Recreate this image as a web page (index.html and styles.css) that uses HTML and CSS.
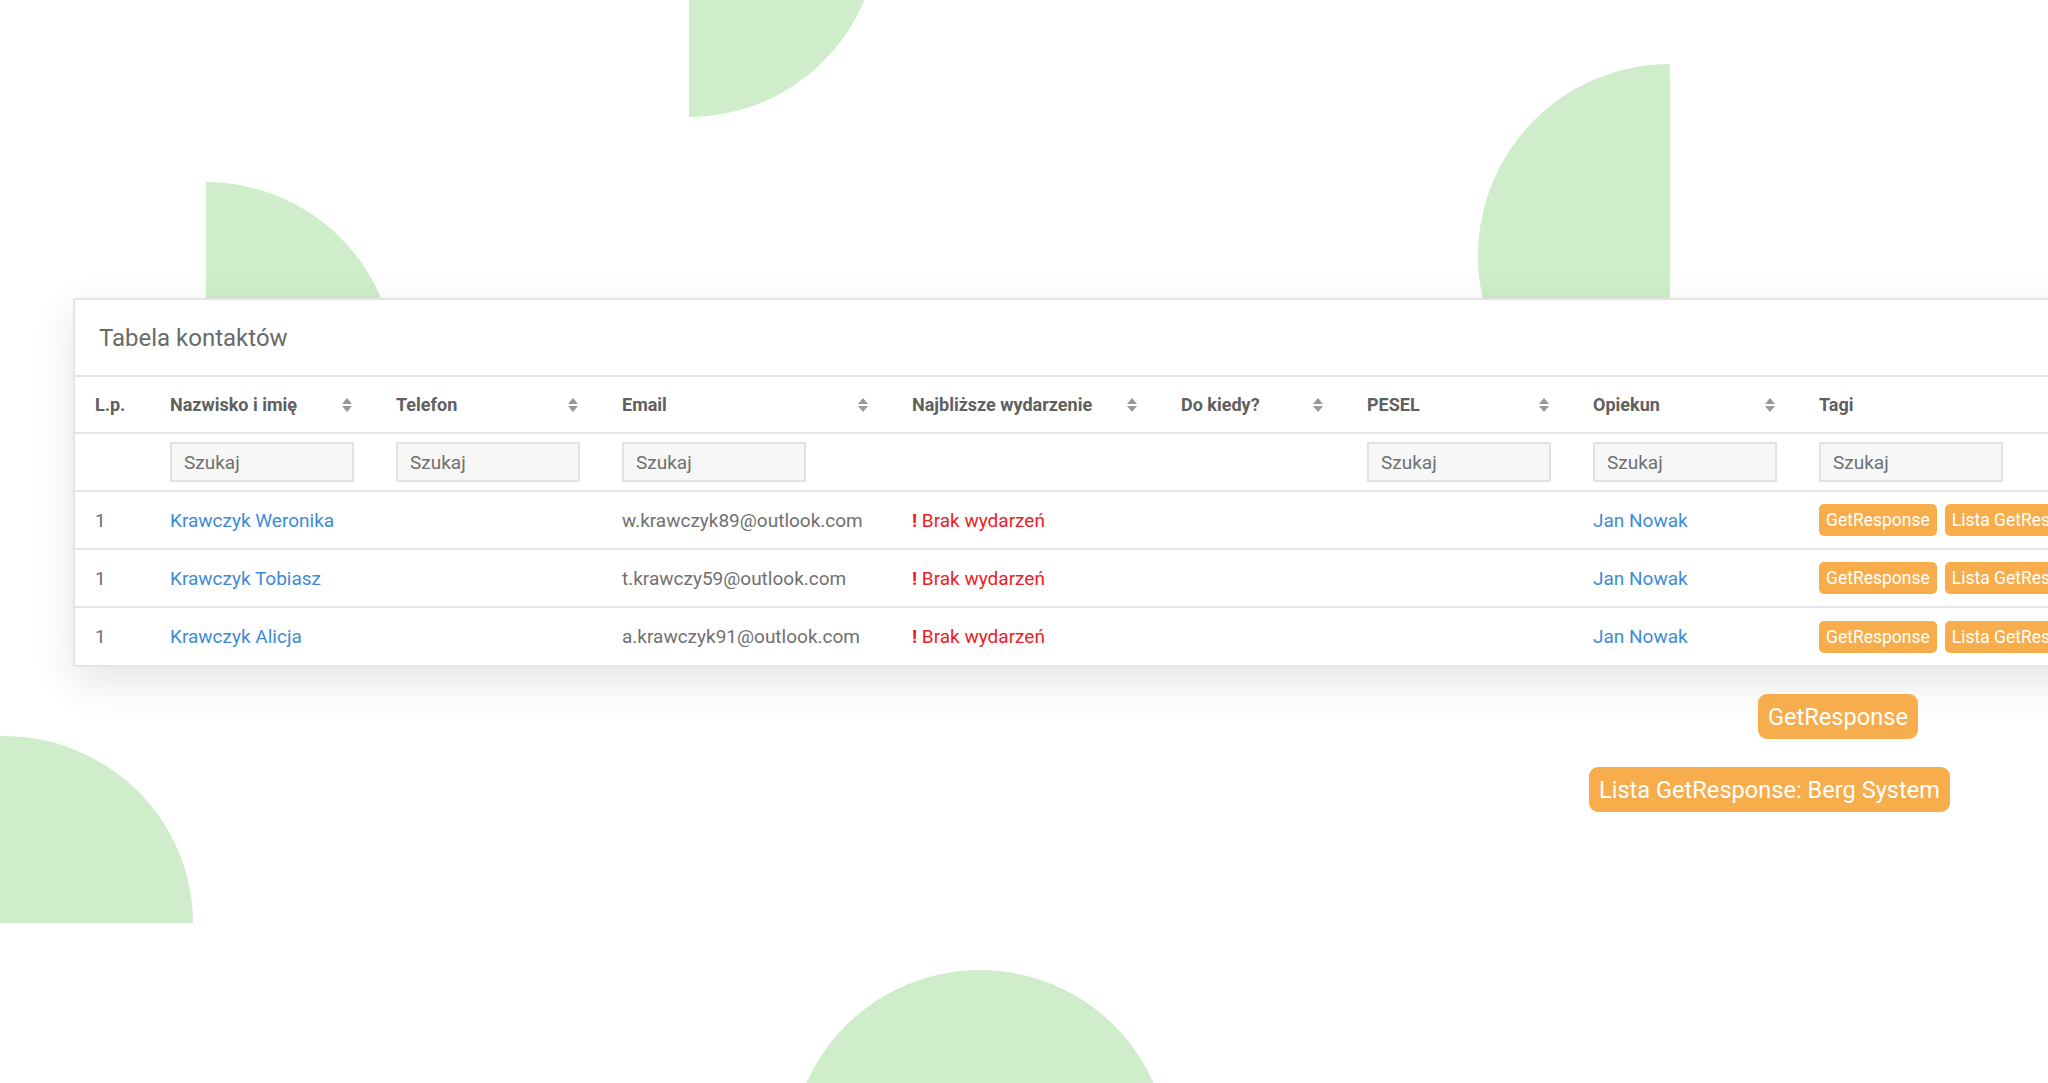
FILE: index.html
```html
<!DOCTYPE html>
<html lang="pl">
<head>
<meta charset="utf-8">
<title>Tabela kontaktów</title>
<link rel="stylesheet" href="styles.css">
</head>
<body>
<div class="canvas">
  <div class="blob blob-top"></div>
  <div class="blob blob-left"></div>
  <div class="blob blob-right"></div>
  <div class="blob blob-bottom-left"></div>
  <div class="blob blob-bottom"></div>

  <section class="card">
    <h2 class="card-title">Tabela kontaktów</h2>
    <table class="contacts">
      <colgroup>
        <col class="c-lp"><col class="c-name"><col class="c-phone"><col class="c-email">
        <col class="c-event"><col class="c-until"><col class="c-pesel"><col class="c-owner"><col class="c-tags">
      </colgroup>
      <thead>
        <tr class="head-row">
          <th>L.p.</th>
          <th><div class="th-in"><span>Nazwisko i imię</span><i class="sort"></i></div></th>
          <th><div class="th-in"><span>Telefon</span><i class="sort"></i></div></th>
          <th><div class="th-in"><span>Email</span><i class="sort"></i></div></th>
          <th><div class="th-in"><span>Najbliższe wydarzenie</span><i class="sort"></i></div></th>
          <th><div class="th-in"><span>Do kiedy?</span><i class="sort"></i></div></th>
          <th><div class="th-in"><span>PESEL</span><i class="sort"></i></div></th>
          <th><div class="th-in"><span>Opiekun</span><i class="sort"></i></div></th>
          <th>Tagi</th>
        </tr>
        <tr class="filter-row">
          <td></td>
          <td><input class="search" placeholder="Szukaj"></td>
          <td><input class="search" placeholder="Szukaj"></td>
          <td><input class="search" placeholder="Szukaj"></td>
          <td></td>
          <td></td>
          <td><input class="search" placeholder="Szukaj"></td>
          <td><input class="search" placeholder="Szukaj"></td>
          <td><input class="search" placeholder="Szukaj"></td>
        </tr>
      </thead>
      <tbody>
        <tr>
          <td>1</td>
          <td><a class="link">Krawczyk Weronika</a></td>
          <td></td>
          <td>w.krawczyk89@outlook.com</td>
          <td class="alert"><b>!</b> Brak wydarzeń</td>
          <td></td>
          <td></td>
          <td><a class="link">Jan Nowak</a></td>
          <td><div class="tags"><span class="tag">GetResponse</span><span class="tag">Lista GetResponse: Berg System</span></div></td>
        </tr>
        <tr>
          <td>1</td>
          <td><a class="link">Krawczyk Tobiasz</a></td>
          <td></td>
          <td>t.krawczy59@outlook.com</td>
          <td class="alert"><b>!</b> Brak wydarzeń</td>
          <td></td>
          <td></td>
          <td><a class="link">Jan Nowak</a></td>
          <td><div class="tags"><span class="tag">GetResponse</span><span class="tag">Lista GetResponse: Berg System</span></div></td>
        </tr>
        <tr>
          <td>1</td>
          <td><a class="link">Krawczyk Alicja</a></td>
          <td></td>
          <td>a.krawczyk91@outlook.com</td>
          <td class="alert"><b>!</b> Brak wydarzeń</td>
          <td></td>
          <td></td>
          <td><a class="link">Jan Nowak</a></td>
          <td><div class="tags"><span class="tag">GetResponse</span><span class="tag">Lista GetResponse: Berg System</span></div></td>
        </tr>
      </tbody>
    </table>
  </section>

  <span class="tag tag-big tag-big-1">GetResponse</span>
  <span class="tag tag-big tag-big-2">Lista GetResponse: Berg System</span>
</div>
</body>
</html>
```
FILE: styles.css
```css
html, body {
  margin: 0;
  padding: 0;
  background: #ffffff;
}

body {
  width: 2048px;
  height: 1083px;
  overflow: hidden;
  font-family: Roboto, "Liberation Sans", Arial, sans-serif;
  color: #707070;
}

.canvas {
  position: relative;
  width: 2048px;
  height: 1083px;
  overflow: hidden;
  padding-top: 298px;
  box-sizing: border-box;
}

/* decorative green half-discs */
.blob {
  position: absolute;
  background: #cfedca;
}
.blob-top {
  left: 689px;
  top: -263px;
  width: 190px;
  height: 380px;
  border-radius: 0 190px 190px 0;
}
.blob-left {
  left: 206px;
  top: 182px;
  width: 190px;
  height: 380px;
  border-radius: 0 190px 190px 0;
}
.blob-right {
  left: 1478px;
  top: 64px;
  width: 192px;
  height: 384px;
  border-radius: 192px 0 0 192px;
}
.blob-bottom-left {
  left: -187px;
  top: 736px;
  width: 380px;
  height: 187px;
  border-radius: 190px 190px 0 0 / 187px 187px 0 0;
}
.blob-bottom {
  left: 790px;
  top: 970px;
  width: 380px;
  height: 380px;
  border-radius: 50%;
}

/* card */
.card {
  position: relative;
  z-index: 1;
  margin-left: 73px;
  width: 2100px;
  background: #ffffff;
  border: 2px solid #e4e4e4;
  border-right: none;
  box-shadow: 0 14px 40px rgba(0, 0, 0, 0.11);
}

.card-title {
  margin: 0;
  height: 75px;
  display: flex;
  align-items: center;
  padding-left: 24px;
  font-size: 24px;
  font-weight: 400;
  color: #6a6a6a;
  border-bottom: 2px solid #e6e6e6;
}

.contacts {
  border-collapse: collapse;
  table-layout: fixed;
  width: 2098px;
  font-size: 19px;
}

.c-lp { width: 75px; }
.c-name { width: 226px; }
.c-phone { width: 226px; }
.c-email { width: 290px; }
.c-event { width: 269px; }
.c-until { width: 186px; }
.c-pesel { width: 226px; }
.c-owner { width: 226px; }
.c-tags { width: 374px; }

.contacts th,
.contacts td {
  padding: 0 0 0 20px;
  text-align: left;
  white-space: nowrap;
  overflow: hidden;
}

.contacts tr {
  border-bottom: 2px solid #e6e6e6;
}
.contacts tbody tr:last-child {
  border-bottom: none;
}

.head-row {
  height: 56px;
}
.head-row th {
  font-weight: 700;
  color: #606060;
  font-size: 18px;
}

.th-in {
  display: flex;
  align-items: center;
  justify-content: space-between;
  padding-right: 24px;
}

/* up / down sort arrows */
.sort {
  display: flex;
  flex-direction: column;
  gap: 2px;
  width: 10px;
}
.sort::before,
.sort::after {
  content: "";
  display: block;
  width: 0;
  height: 0;
  border-left: 5px solid transparent;
  border-right: 5px solid transparent;
}
.sort::before {
  border-bottom: 6px solid #9a9a9a;
}
.sort::after {
  border-top: 6px solid #9a9a9a;
}

.filter-row {
  height: 58px;
}

.search {
  display: block;
  box-sizing: border-box;
  width: 184px;
  height: 40px;
  padding: 0 12px;
  border: 2px solid #e2e2e2;
  background: #f7f7f7;
  font-family: inherit;
  font-size: 19px;
  color: #707070;
  outline: none;
}
.search::placeholder {
  color: #707070;
  opacity: 1;
}

.contacts tbody tr {
  height: 58px;
}

.link {
  color: #3d8bd6;
  text-decoration: none;
}

.alert {
  color: #ee1c24;
}
.alert b {
  font-weight: 700;
}

.tags {
  display: flex;
  gap: 8px;
}

.tag {
  display: inline-flex;
  align-items: center;
  height: 32px;
  padding: 0 7px;
  border-radius: 5px;
  background: #f7ad4b;
  color: #ffffff;
  font-size: 17.5px;
  white-space: nowrap;
}

/* enlarged tag callouts */
.tag-big {
  position: absolute;
  z-index: 2;
  height: 45px;
  padding: 0 10px;
  border-radius: 9px;
  font-size: 23.6px;
}
.tag-big-1 {
  left: 1758px;
  top: 694px;
}
.tag-big-2 {
  left: 1589px;
  top: 767px;
}
```
